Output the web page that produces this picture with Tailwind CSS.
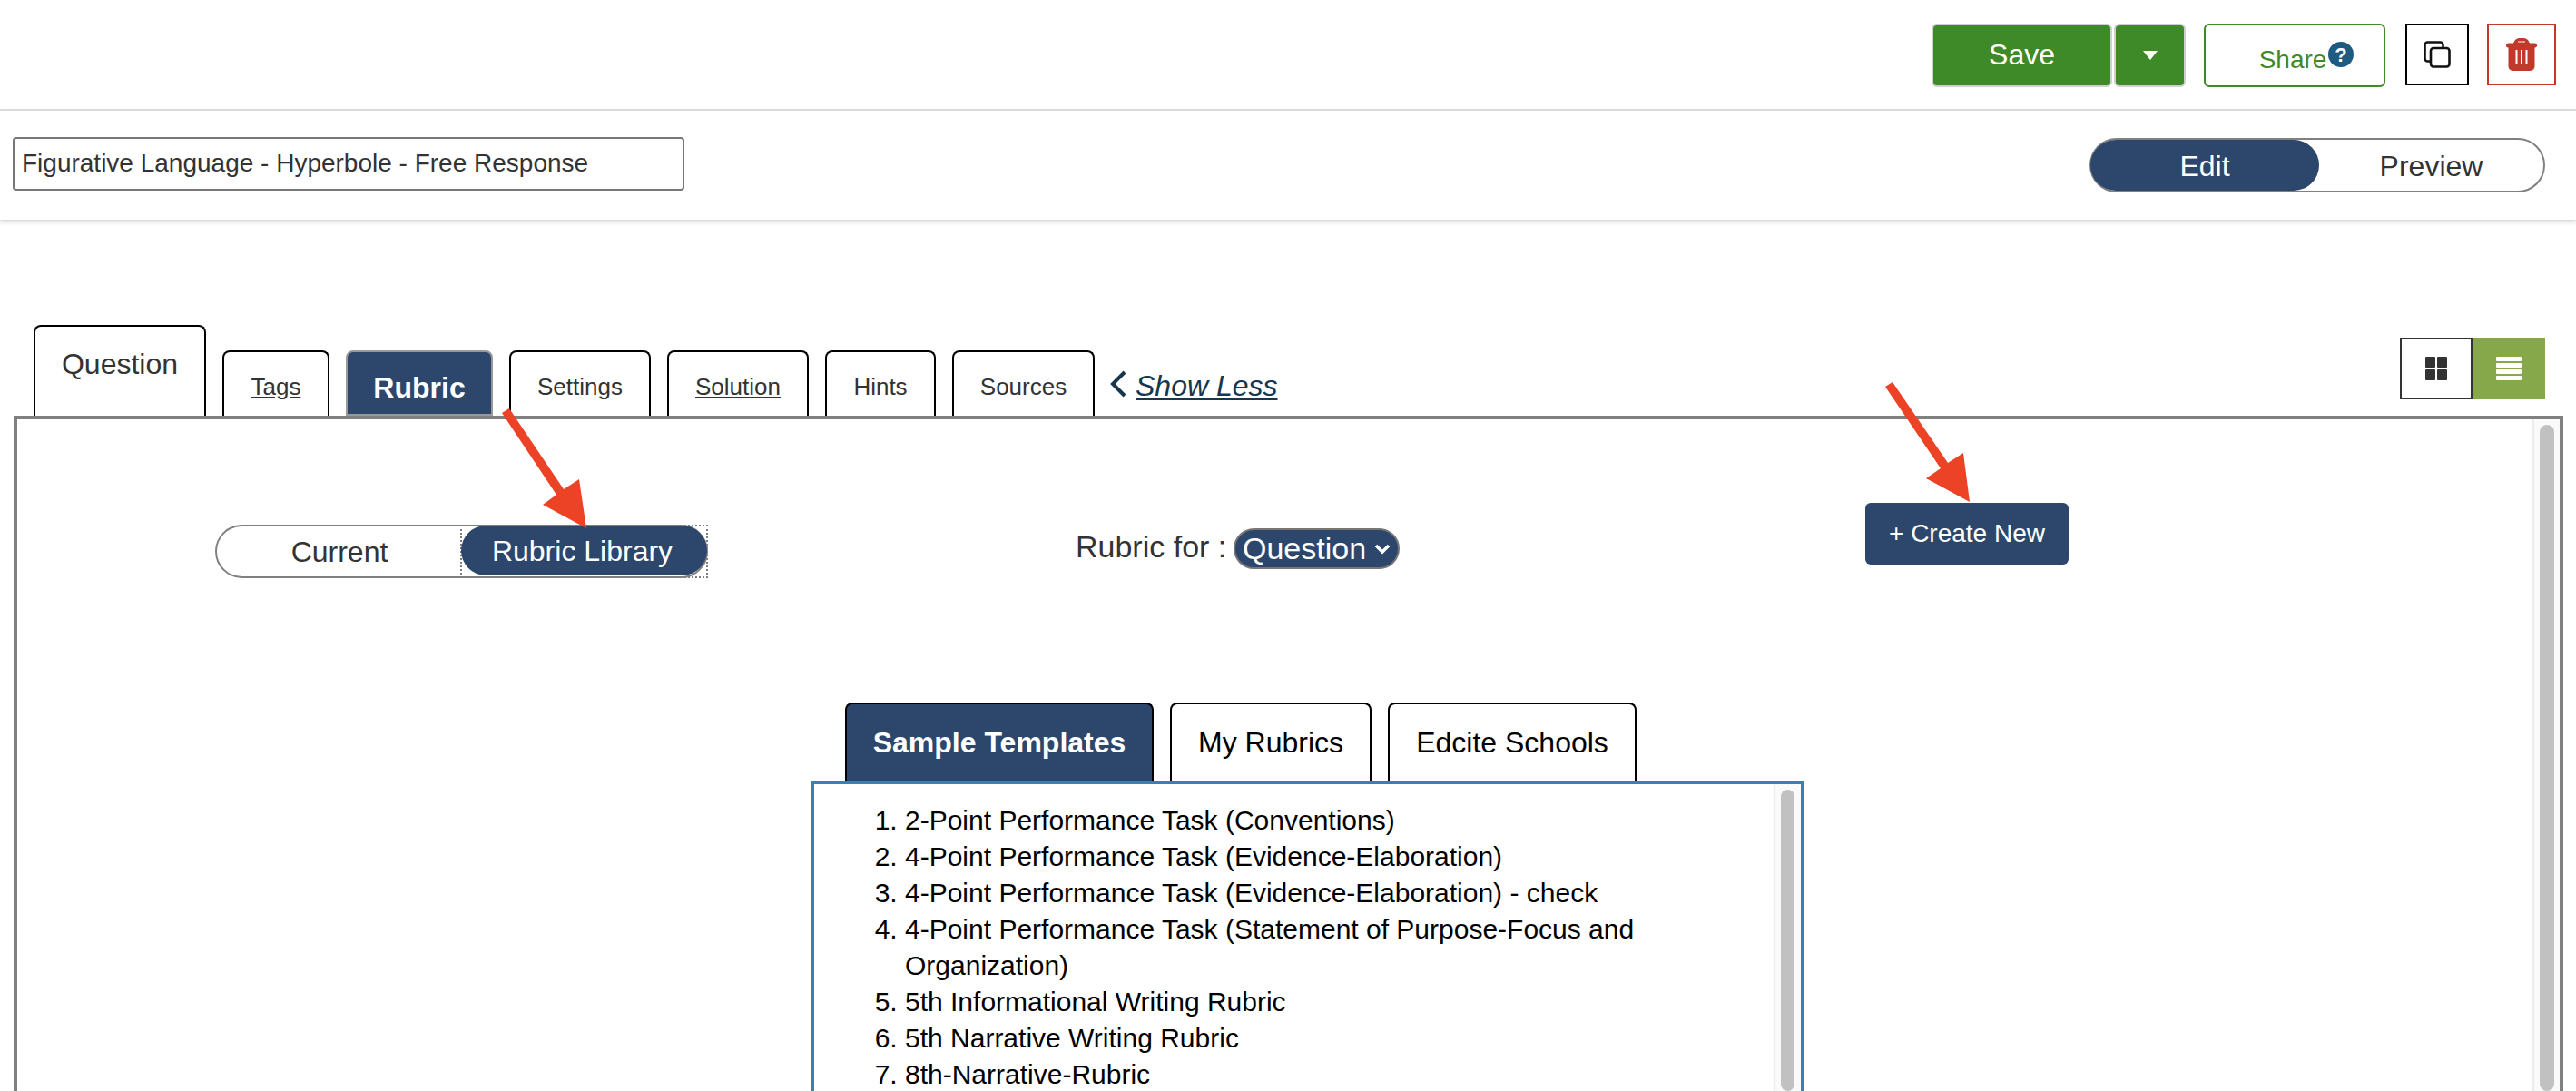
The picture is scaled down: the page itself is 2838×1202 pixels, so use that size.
<!DOCTYPE html>
<html lang="en">

<head>
    <meta charset="UTF-8">
    <title>Figurative Language - Hyperbole - Free Response</title>
    <script src="https://cdn.jsdelivr.net/npm/@tailwindcss/browser@4"></script>
</head>

<body class="relative flex flex-col h-[1202px] overflow-hidden bg-white text-[#333] font-['Liberation_Sans',Arial,sans-serif]">
    <!-- top actions -->
    <div class="flex items-start h-[122px] pt-[26px] pr-[22px] justify-end border-b-2 border-[#e0e0e0] shrink-0">
        <button class="w-[199px] h-[70px] bg-[#3f8a28] border-2 border-[#cfcfcf] rounded-[6px] text-white text-[32px] pb-[2px]">Save</button>
        <button class="w-[79px] h-[70px] ml-[2px] bg-[#3f8a28] border-2 border-[#cfcfcf] rounded-[6px] flex items-center justify-center">
            <svg width="18" height="12" viewBox="0 0 18 12"><path d="M1 1h16l-8 10z" fill="#fff" /></svg>
        </button>
        <button class="w-[200px] h-[70px] ml-[20px] border-2 border-[#3f8a28] rounded-[6px] flex items-start justify-center pl-[26px] pt-[20px] text-[#3f8a28] text-[28px] leading-[36px]">
            Share
            <svg class="mt-[-2px] ml-[2px]" width="28" height="28" viewBox="0 0 28 28"><circle cx="14" cy="14" r="14" fill="#1f5a80" /><text x="14" y="22" text-anchor="middle" font-size="22" font-weight="700" fill="#fff" font-family="Liberation Sans">?</text></svg>
        </button>
        <button class="w-[70px] h-[68px] ml-[22px] border-2 border-black flex items-center justify-center">
            <svg width="30" height="30" viewBox="0 0 30 30" fill="none" stroke="#111" stroke-width="2.6"><rect x="1.500" y="1.500" width="20" height="21" rx="3" /><rect x="8" y="8" width="20.500" height="20.500" rx="3" fill="#fff" /></svg>
        </button>
        <button class="w-[76px] h-[68px] ml-[20px] border-2 border-[#c0392b] flex items-center justify-center">
            <svg width="34" height="36" viewBox="0 0 34 36" fill="#c0392b"><path fill-rule="evenodd" d="M8 6C9 2 12 0 15 0h4c3 0 6 2 7 6zM13 3.500h8v1h-8z" /><rect y="5.500" width="34" height="5" rx="2.500" /><path fill-rule="evenodd" d="M2.500 10h29v21a5 5 0 0 1-5 5h-19a5 5 0 0 1-5-5zM10.500 13v16h2V13zM16 13v16h2V13zM21.500 13v16h2V13z" /></svg>
        </button>
    </div>

    <!-- title row -->
    <div class="flex items-center justify-between h-[120px] pl-[14px] pr-[34px] shrink-0 shadow-[0_2px_5px_rgba(0,0,0,0.2)]">
        <input value="Figurative Language - Hyperbole - Free Response" class="w-[740px] h-[59px] mb-[4px] border-2 border-[#777] rounded-[4px] pl-[8px] text-[28px]">
        <div class="flex w-[502px] h-[60px] border-2 border-[#808080] rounded-full text-[32px]">
            <div class="w-[252px] -ml-[1px] pt-[2px] bg-[#2c476b] text-white rounded-full flex items-center justify-center">Edit</div>
            <div class="flex-1 pt-[2px] flex items-center justify-center">Preview</div>
        </div>
    </div>

    <!-- tabs -->
    <div class="flex items-end h-[100px] mt-[116px] pl-[37px] pr-[34px] gap-[18px] shrink-0">
        <div class="w-[190px] h-[100px] border-2 border-b-0 border-black rounded-t-[8px] text-[32px] text-center pt-[17px]">Question</div>
        <div class="w-[118px] h-[72px] border-2 border-b-0 border-black rounded-t-[8px] text-[26px] text-center pt-[19px] underline">Tags</div>
        <div class="w-[162px] h-[72px] border-2 border-[#999] rounded-t-[8px] bg-[#2c476b] text-white font-bold text-[32px] text-center pt-[15px]">Rubric</div>
        <div class="w-[156px] h-[72px] border-2 border-b-0 border-black rounded-t-[8px] text-[26px] text-center pt-[19px]">Settings</div>
        <div class="w-[156px] h-[72px] border-2 border-b-0 border-black rounded-t-[8px] text-[26px] text-center pt-[19px] underline">Solution</div>
        <div class="w-[122px] h-[72px] border-2 border-b-0 border-black rounded-t-[8px] text-[26px] text-center pt-[19px]">Hints</div>
        <div class="w-[157px] h-[72px] border-2 border-b-0 border-black rounded-t-[8px] text-[26px] text-center pt-[19px]">Sources</div>
        <div class="flex items-center -ml-[3px] h-[72px] pt-[6px] text-[#17364f] text-[32px] italic underline">
            <svg class="mr-[10px] mt-[-4px]" width="20" height="30" viewBox="0 0 20 30" fill="none" stroke="#17364f" stroke-width="4"><path d="M18 2L5 15l13 13" /></svg>
            Show Less
        </div>
        <div class="flex ml-auto mb-[18px]">
            <div class="w-[80px] h-[68px] border-2 border-[#333] flex items-center justify-center">
                <svg width="24" height="26" viewBox="0 0 24 26" fill="#333"><rect width="11" height="12" rx="1" /><rect x="13" width="11" height="12" rx="1" /><rect y="14" width="11" height="12" rx="1" /><rect x="13" y="14" width="11" height="12" rx="1" /></svg>
            </div>
            <div class="w-[80px] h-[68px] bg-[#86a84b] flex items-center justify-center">
                <svg width="28" height="26" viewBox="0 0 28 26" fill="#fff"><rect width="28" height="5" rx="1" /><rect y="7" width="28" height="5" rx="1" /><rect y="14" width="28" height="5" rx="1" /><rect y="21" width="28" height="5" rx="1" /></svg>
            </div>
        </div>
    </div>

    <!-- panel -->
    <div class="flex flex-1 min-h-0 ml-[15px] mr-[14px] border-4 border-b-0 border-[#808080]">
        <div class="flex flex-col flex-1 min-w-0 pt-[92px]">
            <div class="flex items-start h-[68px] shrink-0">
                <div class="flex w-[543px] h-[59px] ml-[218px] mt-[24px] border-2 border-[#808080] rounded-full text-[32px]">
                    <div class="w-[268px] pl-[2px] flex items-center justify-center">Current</div>
                    <div class="flex-1 -my-[2px] -mr-[2px] border-2 border-dotted border-[#808080]">
                        <div class="h-full -m-[1px] pr-[4px] bg-[#2c476b] text-white rounded-full flex items-center justify-center">Rubric Library</div>
                    </div>
                </div>
                <span class="w-[164px] ml-[405px] mt-[26px] text-[34px] leading-[44px] whitespace-nowrap">Rubric for :</span>
                <div class="flex items-center w-[183px] h-[45px] ml-[10px] mt-[28px] pl-[8px] bg-[#2c476b] border-2 border-[#777] rounded-full text-white text-[34px]">
                    Question
                    <svg class="ml-[9px]" width="18" height="12" viewBox="0 0 18 12" fill="none" stroke="#fff" stroke-width="3.500"><path d="M2 2l7 7 7-7" /></svg>
                </div>
                <button class="w-[224px] h-[68px] ml-[513px] bg-[#2c476b] text-white text-[28px] rounded-[6px]">+ Create New</button>
            </div>

            <div class="flex gap-[18px] ml-[912px] mt-[152px] h-[86px] shrink-0">
                <div class="w-[340px] bg-[#2c476b] border-2 border-b-0 border-black rounded-t-[8px] text-white font-bold text-[32px] text-center pt-[18px]">Sample Templates</div>
                <div class="w-[222px] border-2 border-b-0 border-black rounded-t-[8px] text-black text-[32px] text-center pt-[18px]">My Rubrics</div>
                <div class="w-[274px] border-2 border-b-0 border-black rounded-t-[8px] text-black text-[32px] text-center pt-[18px]">Edcite Schools</div>
            </div>
            <div class="flex flex-1 min-h-0 w-[1095px] ml-[874px] border-4 border-b-0 border-[#3c7fb1]">
                <ol class="flex-1 list-decimal pl-[100px] pr-[60px] pt-[20px] text-[30px] leading-[40px] text-black">
                    <li>2-Point Performance Task (Conventions)</li>
                    <li>4-Point Performance Task (Evidence-Elaboration)</li>
                    <li>4-Point Performance Task (Evidence-Elaboration) - check</li>
                    <li>4-Point Performance Task (Statement of Purpose-Focus and Organization)</li>
                    <li>5th Informational Writing Rubric</li>
                    <li>5th Narrative Writing Rubric</li>
                    <li>8th-Narrative-Rubric</li>
                </ol>
                <div class="w-[30px] bg-[#fafafa] border-l-2 border-[#ececec] pl-[6px] pt-[6px]">
                    <div class="w-[15px] h-full bg-[#c1c1c1] rounded-full"></div>
                </div>
            </div>
        </div>
        <div class="w-[30px] bg-[#fafafa] border-l-2 border-[#ececec] pl-[6px] pt-[6px]">
            <div class="w-[16px] h-full bg-[#c1c1c1] rounded-full"></div>
        </div>
    </div>

    <!-- annotation arrows -->
    <svg class="absolute left-0 top-0 pointer-events-none" width="2838" height="1202" fill="#ec4226">
        <polygon points="553,455 561,450 621,539 638,528 646,582 598,556 613,545" />
        <polygon points="2077,426 2085,421 2146,510 2163,499 2170,553 2122,527 2138,516" />
    </svg>
</body>

</html>
